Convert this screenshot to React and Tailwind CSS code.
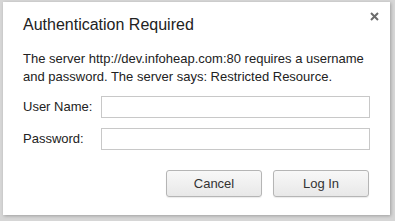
export default function App() {
  return (
    <div className="w-[395px] h-[221px] bg-[#d6d6d6] pt-[2px] pl-[3px]" style={{ fontFamily: '"Liberation Sans", Arial, sans-serif' }}>
      <div className="relative w-[387px] h-[213px] bg-white shadow-[1px_1px_3px_rgba(0,0,0,0.25)] pl-[20px] pr-[20px]">
        <button className="absolute right-[10px] top-[8px] w-[12px] h-[12px] flex items-center justify-center text-[#6b6b6b]">
          <svg width="9" height="9" viewBox="0 0 9 9">
            <path d="M1 1L8 8M8 1L1 8" stroke="#6b6b6b" strokeWidth="2" />
          </svg>
        </button>
        <h1 className="pt-[13px] text-[16px] leading-[20px] text-[#222]">Authentication Required</h1>
        <p className="mt-[15px] text-[13px] leading-[18px] text-[#222]">
          The server http://dev.infoheap.com:80 requires a username and password. The server says: Restricted Resource.
        </p>
        <div className="mt-[10px] flex flex-col gap-[10px]">
          <div className="flex items-center">
            <label className="w-[78px] text-[13px] text-[#222]">User Name:</label>
            <input className="w-[269px] h-[22px] border border-[#c8c8c8] outline-none" />
          </div>
          <div className="flex items-center">
            <label className="w-[78px] text-[13px] text-[#222]">Password:</label>
            <input type="password" className="w-[269px] h-[22px] border border-[#c8c8c8] outline-none" />
          </div>
        </div>
        <div className="mt-[20px] flex justify-end gap-[11px] pr-[1px]">
          <button className="w-[96px] h-[27px] rounded-[3px] border border-[#b5b5b5] bg-gradient-to-b from-[#f8f8f8] to-[#e8e8e8] text-[13px] text-[#333] shadow-[0_1px_1px_rgba(0,0,0,0.08)]">Cancel</button>
          <button className="w-[96px] h-[27px] rounded-[3px] border border-[#b5b5b5] bg-gradient-to-b from-[#f8f8f8] to-[#e8e8e8] text-[13px] text-[#333] shadow-[0_1px_1px_rgba(0,0,0,0.08)]">Log In</button>
        </div>
      </div>
    </div>
  );
}
